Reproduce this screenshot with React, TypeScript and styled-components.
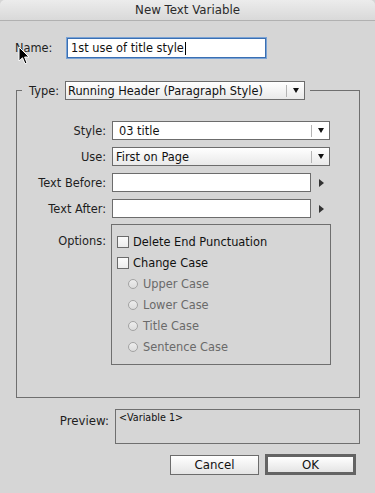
import React from "react";
import styled, { createGlobalStyle } from "styled-components";

const GlobalStyle = createGlobalStyle`
    html, body {
        margin: 0;
        padding: 0;
        background: #d6d6d6;
    }
    body {
        font-family: "DejaVu Sans", "Liberation Sans", sans-serif;
        font-size: 11.4px;
        color: #1e1e1e;
    }
`;

const Window = styled.div`
    position: relative;
    width: 375px;
    height: 493px;
    background: #d6d6d6;
    display: flex;
    flex-direction: column;
    overflow: hidden;
`;

const TitleBar = styled.div`
    height: 20px;
    line-height: 21px;
    text-align: center;
    font-size: 11.8px;
    color: #2a2a2a;
    background: linear-gradient(#ececec, #d9d9d9);
    border-bottom: 1px solid #b1b1b1;
    border-radius: 5px 5px 0 0;
`;

const Body = styled.div`
    padding: 0 15px;
    display: flex;
    flex-direction: column;
`;

const NameRow = styled.div`
    display: flex;
    align-items: center;
    margin-top: 17px;
    height: 20px;
`;

const Label = styled.div<{ $w: number; $right?: boolean }>`
    width: ${(p) => p.$w}px;
    flex: none;
    text-align: ${(p) => (p.$right ? "right" : "left")};
    white-space: nowrap;
`;

const TextBox = styled.div<{ $w: number; $focus?: boolean }>`
    box-sizing: border-box;
    width: ${(p) => p.$w}px;
    height: ${(p) => (p.$focus ? 20 : 19)}px;
    background: #fff;
    border: 1px solid ${(p) => (p.$focus ? "#3a6fb2" : "#6c6c6c")};
    box-shadow: ${(p) => (p.$focus ? "0 0 0 1px #7aa3d6" : "none")};
    display: flex;
    align-items: center;
    padding-left: 3px;
    white-space: nowrap;
    color: #111;
`;

const Caret = styled.span`
    display: inline-block;
    width: 1px;
    height: 13px;
    background: #000;
    margin-left: 1px;
`;

const Group = styled.fieldset`
    box-sizing: border-box;
    margin: 23px 0 0 1px;
    width: 344px;
    padding: 21px 0 32px 0;
    border: 1px solid #6f6f6f;
    min-width: 0;
`;

const Legend = styled.legend`
    margin-left: 5px;
    padding: 0 5px 0 7px;
    display: flex;
    align-items: center;
    gap: 6px;
`;

const Select = styled.div<{ $w: number; $shade?: boolean }>`
    box-sizing: border-box;
    width: ${(p) => p.$w}px;
    height: 19px;
    border: 1px solid #6c6c6c;
    background: ${(p) => (p.$shade ? "linear-gradient(#ffffff, #e9e9e9)" : "#fff")};
    display: flex;
    align-items: center;
    color: #111;
`;

const SelectText = styled.span<{ $pad: number }>`
    flex: 1;
    padding-left: ${(p) => p.$pad}px;
    white-space: nowrap;
    overflow: hidden;
`;

const SelectDivider = styled.span`
    width: 1px;
    height: 12px;
    background: #b4b4b4;
`;

const DownArrow = styled.span`
    width: 17px;
    display: flex;
    justify-content: center;
    &::after {
        content: "";
        border-left: 3.5px solid transparent;
        border-right: 3.5px solid transparent;
        border-top: 5px solid #111;
    }
`;

const FieldRow = styled.div<{ $gap?: number }>`
    display: flex;
    align-items: center;
    margin-bottom: ${(p) => p.$gap ?? 7}px;
`;

const FieldLabel = styled(Label)`
    margin-right: 6px;
`;

const RightArrow = styled.span`
    margin-left: 8px;
    width: 0;
    height: 0;
    border-top: 4px solid transparent;
    border-bottom: 4px solid transparent;
    border-left: 5px solid #333;
`;

const OptionsRow = styled.div`
    display: flex;
    align-items: flex-start;
`;

const OptionsLabel = styled(Label)`
    padding-top: 10px;
    margin-right: 5px;
`;

const OptionsBox = styled.div`
    box-sizing: border-box;
    width: 220px;
    height: 141px;
    border: 1px solid #6f6f6f;
    padding: 6px 0 0 5px;
    display: flex;
    flex-direction: column;
`;

const OptionItem = styled.div<{ $indent?: boolean; $disabled?: boolean }>`
    height: 21px;
    display: flex;
    align-items: center;
    padding-left: ${(p) => (p.$indent ? 11 : 0)}px;
    color: ${(p) => (p.$disabled ? "#6a6a6a" : "#111")};
`;

const CheckBox = styled.span`
    box-sizing: border-box;
    width: 12px;
    height: 12px;
    border: 1px solid #6b6b6b;
    background: linear-gradient(#fbfbfb, #ececec);
    margin-right: 4px;
`;

const Radio = styled.span`
    box-sizing: border-box;
    width: 10px;
    height: 10px;
    border-radius: 50%;
    border: 1px solid #a3a3a3;
    background: linear-gradient(#ededed, #dcdcdc);
    margin-right: 5px;
`;

const PreviewRow = styled.div`
    display: flex;
    align-items: flex-start;
    margin-top: 11px;
`;

const PreviewLabel = styled(Label)`
    padding-top: 5px;
    margin-right: 6px;
    font-size: 11.8px;
`;

const PreviewBox = styled.div`
    box-sizing: border-box;
    width: 246px;
    height: 35px;
    border: 1px solid #6f6f6f;
    padding: 2px 0 0 3px;
    font-size: 9.6px;
    color: #111;
`;

const ButtonRow = styled.div`
    display: flex;
    justify-content: flex-end;
    align-items: center;
    gap: 6px;
    margin-top: 10px;
    padding-right: 4px;
`;

const Button = styled.div<{ $default?: boolean }>`
    box-sizing: border-box;
    width: ${(p) => (p.$default ? 91 : 89)}px;
    height: ${(p) => (p.$default ? 21 : 20)}px;
    border: ${(p) => (p.$default ? "3px solid #646464" : "1px solid #6c6c6c")};
    background: linear-gradient(#ffffff, #e4e4e4);
    display: flex;
    align-items: center;
    justify-content: center;
    font-size: 11.8px;
    color: #111;
`;

const Pointer = styled.svg`
    position: absolute;
    left: 18px;
    top: 46px;
`;

const CaseOptions = ["Upper Case", "Lower Case", "Title Case", "Sentence Case"];

const App = () => {
    return (
        <Window>
            <GlobalStyle />
            <TitleBar>New Text Variable</TitleBar>
            <Body>
                <NameRow>
                    <Label $w={52}>Name:</Label>
                    <TextBox $w={199} $focus>
                        1st use of title style<Caret />
                    </TextBox>
                </NameRow>

                <Group>
                    <Legend>
                        <span>Type:</span>
                        <Select $w={240} $shade>
                            <SelectText $pad={2}>Running Header (Paragraph Style)</SelectText>
                            <SelectDivider />
                            <DownArrow />
                        </Select>
                    </Legend>

                    <FieldRow>
                        <FieldLabel $w={89} $right>Style:</FieldLabel>
                        <Select $w={218}>
                            <SelectText $pad={6}>03 title</SelectText>
                            <SelectDivider />
                            <DownArrow />
                        </Select>
                    </FieldRow>
                    <FieldRow>
                        <FieldLabel $w={89} $right>Use:</FieldLabel>
                        <Select $w={218} $shade>
                            <SelectText $pad={3}>First on Page</SelectText>
                            <SelectDivider />
                            <DownArrow />
                        </Select>
                    </FieldRow>
                    <FieldRow>
                        <FieldLabel $w={89} $right>Text Before:</FieldLabel>
                        <TextBox $w={199} />
                        <RightArrow />
                    </FieldRow>
                    <FieldRow $gap={6}>
                        <FieldLabel $w={89} $right>Text After:</FieldLabel>
                        <TextBox $w={199} />
                        <RightArrow />
                    </FieldRow>

                    <OptionsRow>
                        <OptionsLabel $w={89} $right>Options:</OptionsLabel>
                        <OptionsBox>
                            <OptionItem><CheckBox />Delete End Punctuation</OptionItem>
                            <OptionItem><CheckBox />Change Case</OptionItem>
                            {CaseOptions.map((c) => (
                                <OptionItem key={c} $indent $disabled><Radio />{c}</OptionItem>
                            ))}
                        </OptionsBox>
                    </OptionsRow>
                </Group>

                <PreviewRow>
                    <PreviewLabel $w={94} $right>Preview:</PreviewLabel>
                    <PreviewBox>&lt;Variable 1&gt;</PreviewBox>
                </PreviewRow>

                <ButtonRow>
                    <Button>Cancel</Button>
                    <Button $default>OK</Button>
                </ButtonRow>
            </Body>

            <Pointer width="12" height="20" viewBox="0 0 12 20">
                <path d="M1 1 L1 15 L4.5 11.8 L7 17.8 L9 17 L6.6 11 L11 11 Z" fill="#000" stroke="#fff" strokeWidth="1" />
            </Pointer>
        </Window>
    );
};

export default App;
